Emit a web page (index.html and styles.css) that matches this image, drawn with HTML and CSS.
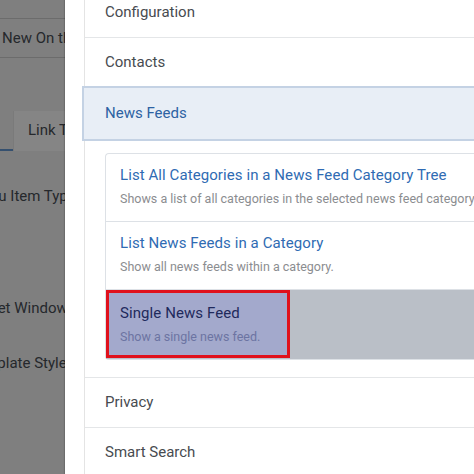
FILE: index.html
```html
<!DOCTYPE html>
<html>
<head>
<meta charset="utf-8">
<link rel="stylesheet" href="styles.css">
</head>
<body>
<div class="page">
  <div class="backdrop">
    <div class="field"><span class="field-text">New On the Site</span></div>
    <div class="tabs">
      <div class="tab-prev"></div>
      <div class="tab">Link Type</div>
    </div>
    <div class="label l-type">Menu Item Type</div>
    <div class="label l-target">Target Window</div>
    <div class="label l-tpl">Template Style</div>
  </div>
  <div class="modal">
    <ul class="list">
      <li class="item">Configuration</li>
      <li class="item">Contacts</li>
      <li class="item open">
        <div class="head">News Feeds</div>
        <div class="sub">
          <div class="sub-item">
            <div class="title">List All Categories in a News Feed Category Tree</div>
            <div class="desc">Shows a list of all categories in the selected news feed category tree.</div>
          </div>
          <div class="sub-item">
            <div class="title">List News Feeds in a Category</div>
            <div class="desc">Show all news feeds within a category.</div>
          </div>
          <div class="sub-item selected">
            <div class="mark">
              <div class="title">Single News Feed</div>
              <div class="desc">Show a single news feed.</div>
            </div>
          </div>
        </div>
      </li>
      <li class="item">Privacy</li>
      <li class="item">Smart Search</li>
    </ul>
  </div>
</div>
</body>
</html>
```
FILE: styles.css
```css
html, body {
  margin: 0;
  padding: 0;
  width: 474px;
  height: 474px;
  overflow: hidden;
  font-family: Roboto, "Liberation Sans", sans-serif;
}
.page {
  display: flex;
  width: 474px;
  height: 474px;
  overflow: hidden;
}
.backdrop {
  width: 65px;
  flex: none;
  background: #7f7f7f;
  overflow: hidden;
  color: #25282c;
  font-size: 15px;
}
.field {
  margin-top: 18px;
  height: 38px;
  border-top: 1px solid #6c6c6c;
  border-bottom: 1px solid #6c6c6c;
  display: flex;
  align-items: center;
  white-space: nowrap;
}
.field-text {
  margin-left: 2px;
}
.tabs {
  margin-top: 53px;
  display: flex;
  height: 40px;
  white-space: nowrap;
}
.tab-prev {
  width: 13px;
  flex: none;
  border-bottom: 2px solid #35506f;
  box-sizing: border-box;
}
.tab {
  flex: none;
  background: #858585;
  padding-left: 14px;
  line-height: 38px;
  border-left: 1px solid #7a7a7a;
}
.label {
  white-space: nowrap;
  line-height: 20px;
}
.l-type {
  margin-top: 35px;
  margin-left: -31px;
}
.l-target {
  margin-top: 92px;
  margin-left: -32px;
}
.l-tpl {
  margin-top: 35px;
  margin-left: -32px;
}
.modal {
  flex: none;
  width: 409px;
  background: #fff;
  padding-left: 19px;
  box-sizing: border-box;
  box-shadow: -1px 0 1px rgba(0,0,0,0.15);
}
.list {
  list-style: none;
  margin: -12px 0 0 0;
  padding: 0;
  border-left: 1px solid #e4e4e4;
  width: 460px;
}
.item {
  padding: 15px 20px;
  line-height: 19px;
  font-size: 15px;
  color: #474b50;
  border-bottom: 1px solid #e4e6e8;
}
.item.open {
  padding: 0 0 17px 0;
}
.head {
  margin: -2px 0 0 -3px;
  height: 55px;
  box-sizing: border-box;
  border: 2px solid #c4d2e4;
  background: #e8eef6;
  color: #2d62a3;
  padding-left: 21px;
  display: flex;
  align-items: center;
}
.sub {
  margin: 12px 0 0 20px;
  border: 1px solid #dde1e6;
  border-radius: 4px 0 0 4px;
  border-right: none;
}
.sub-item {
  height: 68px;
  box-sizing: border-box;
  padding: 10px 14px 0;
  border-bottom: 1px solid #dde1e6;
  white-space: nowrap;
}
.sub-item.selected {
  border-bottom: none;
  padding: 0;
  background: #babfc7;
  display: flex;
  height: 69px;
}
.title {
  font-size: 15px;
  line-height: 22px;
  color: #2f6bb3;
  letter-spacing: 0.08px;
}
.desc {
  margin-top: 4px;
  font-size: 12.5px;
  line-height: 18px;
  color: #8b8d90;
}
.mark {
  width: 184px;
  height: 68px;
  box-sizing: border-box;
  border: 3px solid #e0111c;
  background: #a3a9cc;
  padding: 9px 0 0 11px;
}
.mark .title {
  color: #1f2a5c;
}
.mark .desc {
  color: #6c74a2;
}
```
